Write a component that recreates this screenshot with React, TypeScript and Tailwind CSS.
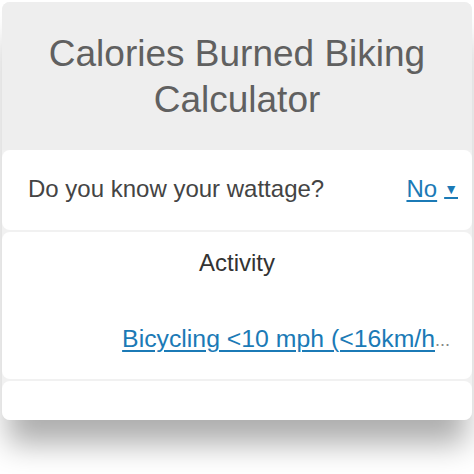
import React from 'react';

export default function App() {
  return (
    <div className="w-[474px] h-[474px] bg-white pt-[2px] px-[2px] font-['Liberation_Sans',Arial,sans-serif]">
      <div className="rounded-lg bg-[#f1f1f1] shadow-[0_30px_30px_-6px_rgba(0,0,0,0.32)]">
        <div className="h-[148px] flex items-center justify-center rounded-t-lg bg-[#eeeeee]">
          <h1 className="text-center text-[37px] leading-[46px] text-[#606060] pt-[2px]">
            Calories Burned Biking
            <br />
            Calculator
          </h1>
        </div>

        <div className="flex flex-col gap-[2px]">
          <div className="h-[80px] flex items-center justify-between pl-[26px] pr-[14px] pb-[2px] bg-white rounded-lg">
            <span className="text-[24px] text-[#444444]">Do you know your wattage?</span>
            <a href="#" className="text-[24px] text-[#1b7ab6] underline underline-offset-[3px] decoration-[1.5px] flex items-center">
              No
              <span className="ml-[7px] text-[14px] leading-none">▼</span>
            </a>
          </div>

          <div className="h-[147px] flex flex-col bg-white rounded-lg">
            <div className="text-center text-[24px] text-[#333333] pt-[13px]">Activity</div>
            <div className="flex justify-end pr-[22px] mt-[39px]">
              <a href="#" className="text-[24.8px] text-[#1b7ab6] underline underline-offset-[3px] decoration-[1.5px]">
                Bicycling &lt;10 mph (&lt;16km/h
              </a>
              <span className="text-[18px] text-[#888888] self-end pb-[3px]">...</span>
            </div>
          </div>

          <div className="h-[39px] bg-white rounded-lg" />
        </div>
      </div>
    </div>
  );
}
